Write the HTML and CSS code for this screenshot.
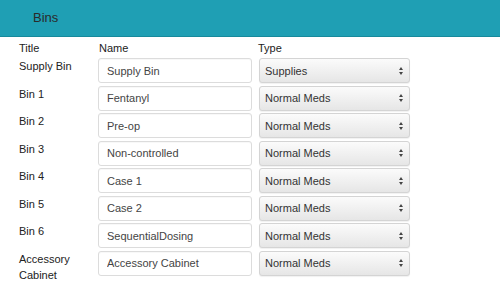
FILE: index.html
```html
<!DOCTYPE html>
<html>
<head>
<meta charset="utf-8">
<link rel="stylesheet" href="styles.css">
</head>
<body>
<header class="bar"><h1 class="bar-title">Bins</h1></header>
<main class="bins">
  <div class="col-head">Title</div>
  <div class="col-head">Name</div>
  <div class="col-head">Type</div>

  <div class="label">Supply Bin</div>
  <input class="name" value="Supply Bin">
  <select class="type"><option>Supplies</option></select>

  <div class="label">Bin 1</div>
  <input class="name" value="Fentanyl">
  <select class="type"><option>Normal Meds</option></select>

  <div class="label">Bin 2</div>
  <input class="name" value="Pre-op">
  <select class="type"><option>Normal Meds</option></select>

  <div class="label">Bin 3</div>
  <input class="name" value="Non-controlled">
  <select class="type"><option>Normal Meds</option></select>

  <div class="label">Bin 4</div>
  <input class="name" value="Case 1">
  <select class="type"><option>Normal Meds</option></select>

  <div class="label">Bin 5</div>
  <input class="name" value="Case 2">
  <select class="type"><option>Normal Meds</option></select>

  <div class="label">Bin 6</div>
  <input class="name" value="SequentialDosing">
  <select class="type"><option>Normal Meds</option></select>

  <div class="label">Accessory Cabinet</div>
  <input class="name" value="Accessory Cabinet">
  <select class="type"><option>Normal Meds</option></select>
</main>
</body>
</html>
```
FILE: styles.css
```css
html {
  overflow: hidden;
}
body {
  margin: 0;
  padding: 0;
  background: #fff;
  font-family: "Liberation Sans", Arial, sans-serif;
  font-size: 11px;
  color: #222;
}
.bar {
  height: 36px;
  background: #1f9fb4;
  border-bottom: 1px solid #178a9c;
  display: flex;
  align-items: center;
  padding-left: 33px;
}
.bar-title {
  margin: 0;
  font-size: 13px;
  font-weight: normal;
  color: #2a2a2a;
  position: relative;
  top: -1px;
}
.bins {
  display: grid;
  grid-template-columns: 79px 160px 152px;
  grid-template-rows: 16px;
  grid-auto-rows: 25px;
  row-gap: 2.45px;
  padding: 3px 0 7px 19px;
}
.col-head {
  line-height: 16px;
  height: 16px;
  color: #222;
}
.col-head:nth-child(2) { padding-left: 1px; }
.label {
  line-height: 16px;
  color: #222;
}
.name {
  box-sizing: border-box;
  width: 154px;
  height: 25px;
  margin: 0;
  border: 1px solid #dcdcdc;
  border-radius: 3px;
  padding: 0 0 0 8px;
  font-family: "Liberation Sans", Arial, sans-serif;
  font-size: 11px;
  color: #444;
  background: #fff;
  box-shadow: inset 0 1px 1px rgba(0,0,0,0.03);
}
.type {
  -webkit-appearance: none;
  appearance: none;
  box-sizing: border-box;
  width: 151px;
  height: 25px;
  margin: 0 0 0 1px;
  border: 1px solid #d4d4d4;
  border-radius: 3px;
  padding: 0 0 0 5px;
  font-family: "Liberation Sans", Arial, sans-serif;
  font-size: 11px;
  color: #333;
  background-image:
    url("data:image/svg+xml;utf8,<svg xmlns='http://www.w3.org/2000/svg' width='6' height='10' viewBox='0 0 6 10'><path d='M3 1 L5 4 L1 4 Z' fill='%23444'/><path d='M1 6 L5 6 L3 9 Z' fill='%23444'/></svg>"),
    linear-gradient(#fbfbfb, #e6e6e6);
  background-repeat: no-repeat, no-repeat;
  background-position: right 5px center, 0 0;
  background-size: 6px 10px, 100% 100%;
  box-shadow: 0 1px 1px rgba(0,0,0,0.06);
}
.bins > :nth-child(n+4) { align-self: start; }
```
